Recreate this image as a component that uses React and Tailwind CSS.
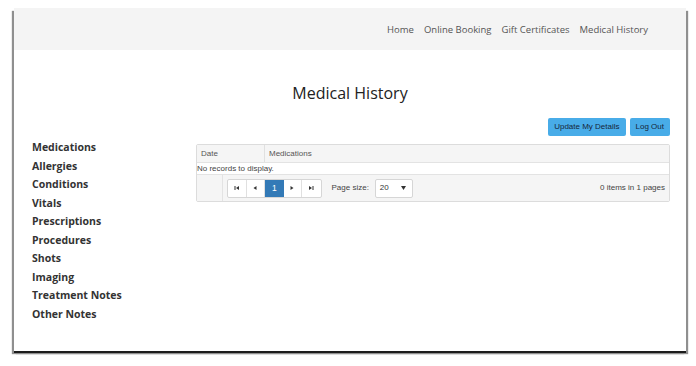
import React from "react";

const side = ["Medications","Allergies","Conditions","Vitals","Prescriptions","Procedures","Shots","Imaging","Treatment Notes","Other Notes"];

function Icon({ kind }) {
  return (
    <svg width="6" height="6" viewBox="0 0 6 6" fill="#333">
      {kind === "first" && (<><rect x="0.5" y="1" width="1" height="4" /><polygon points="5,1 5,5 2,3" /></>)}
      {kind === "prev" && <polygon points="4.5,1 4.5,5 1.5,3" />}
      {kind === "next" && <polygon points="1.5,1 1.5,5 4.5,3" />}
      {kind === "last" && (<><polygon points="1,1 1,5 4,3" /><rect x="4.5" y="1" width="1" height="4" /></>)}
    </svg>
  );
}

export default function App() {
  return (
    <div className="w-[696px] h-[366px] bg-white pt-[8px] pl-[14px]">
      <div className="w-[672px] h-[343px] bg-white flex flex-col shadow-[0_2px_0_#1c1c1c,-2px_3px_1px_#8f8f8f,2px_3px_1px_#8f8f8f]" style={{ fontFamily: '"Open Sans", sans-serif' }}>
        <div className="h-[42px] bg-[#f4f4f4] flex items-center justify-end pr-[38px] gap-[10px] text-[9.5px] text-[#555] pt-[2px]">
          <span>Home</span>
          <span>Online Booking</span>
          <span>Gift Certificates</span>
          <span>Medical History</span>
        </div>
        <div className="mt-[32px] text-center text-[16px] leading-[22px] text-[#222] font-medium">Medical History</div>
        <div className="flex mt-[14px] pl-[18px] pr-[16px]">
          <div className="w-[164px] pt-[20px] flex flex-col text-[10.5px] leading-[18.5px] font-bold text-[#333]">
            {side.map((s) => (<span key={s}>{s}</span>))}
          </div>
          <div className="flex-1 flex flex-col" style={{ fontFamily: '"Liberation Sans", Arial, sans-serif' }}>
            <div className="flex justify-end gap-[4px] h-[18px]">
              <div className="bg-[#48ace8] text-[#16263a] text-[8px] px-[6px] flex items-center rounded-[2px]">Update My Details</div>
              <div className="bg-[#48ace8] text-[#16263a] text-[8px] px-[6px] flex items-center rounded-[2px]">Log Out</div>
            </div>
            <div className="mt-[8px] border border-[#dcdcdc] rounded-[2px] text-[8px] text-[#555]">
              <div className="flex h-[17px] bg-[#f5f5f5]">
                <div className="w-[68px] border-r border-[#e0e0e0] flex items-center pl-[4px]">Date</div>
                <div className="flex items-center pl-[4px]">Medications</div>
              </div>
              <div className="h-[12px] border-t border-[#e3e3e3] flex items-center text-[#444] bg-white">No records to display.</div>
              <div className="h-[27px] border-t border-[#e3e3e3] bg-[#f5f5f5] flex items-center">
                <div className="w-[26px] h-full border-r border-[#e3e3e3]"></div>
                <div className="ml-[4px] flex h-[19px] border border-[#d6d6d6] rounded-[2px] bg-white">
                  <div className="w-[18.5px] flex items-center justify-center border-r border-[#e0e0e0]"><Icon kind="first" /></div>
                  <div className="w-[18.5px] flex items-center justify-center border-r border-[#e0e0e0]"><Icon kind="prev" /></div>
                  <div className="w-[18.5px] flex items-center justify-center bg-[#337ab7] text-white text-[8.5px]">1</div>
                  <div className="w-[18.5px] flex items-center justify-center border-r border-[#e0e0e0]"><Icon kind="next" /></div>
                  <div className="w-[18.5px] flex items-center justify-center"><Icon kind="last" /></div>
                </div>
                <span className="ml-[10px] text-[8px] text-[#444]">Page size:</span>
                <div className="ml-[6px] w-[38px] h-[19px] border border-[#d6d6d6] rounded-[2px] bg-white flex items-center justify-between pl-[4px] pr-[6px] text-[8px] text-[#333]">
                  <span>20</span>
                  <svg width="5" height="4" viewBox="0 0 5 4" fill="#333"><polygon points="0,0 5,0 2.5,4" /></svg>
                </div>
                <span className="ml-auto mr-[4px] text-[8px] text-[#444]">0 items in 1 pages</span>
              </div>
            </div>
          </div>
        </div>
      </div>
    </div>
  );
}
